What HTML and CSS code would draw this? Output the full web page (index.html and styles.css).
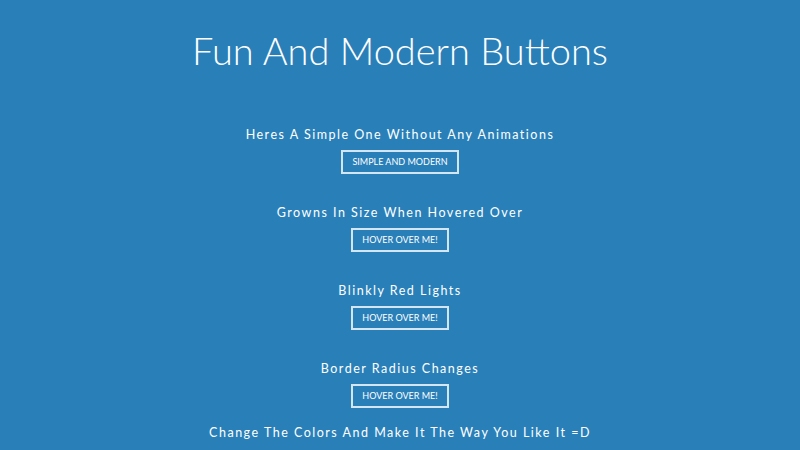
FILE: index.html
```html
<!DOCTYPE html>
<html lang="en">
<head>
    <meta charset="UTF-8">
    <meta name="viewport" content="width=device-width, initial-scale=1.0">
    <title>Fun And Modern Buttons</title>
    <link rel="stylesheet" href="styles.css">
</head>
<body>
    <h1>Fun And Modern Buttons</h1>

    <div class="demo">
        <p class="label">Heres A Simple One Without Any Animations</p>
        <button class="btn btn_simple">Simple and Modern</button>
    </div>
    <div class="demo">
        <p class="label">Growns In Size When Hovered Over</p>
        <button class="btn btn_grow">Hover Over Me!</button>
    </div>
    <div class="demo">
        <p class="label">Blinkly Red Lights</p>
        <button class="btn btn_blink">Hover Over Me!</button>
    </div>
    <div class="demo last">
        <p class="label">Border Radius Changes</p>
        <button class="btn btn_radius">Hover Over Me!</button>
    </div>
    <p class="label">Change The Colors And Make It The Way You Like It =D</p>
</body>
</html>
```
FILE: styles.css
```css
* {
  font-family: Lato, "Open Sans", sans-serif;
  box-sizing: border-box;
}
body {
  margin: 0;
  height: 100vh;
  background: #2980b9;
  color: #fff;
  text-align: center;
}
h1 {
  margin: 0;
  padding-top: 24px;
  height: 125px;
  font-size: 38px;
  font-weight: 300;
  line-height: 52px;
}
.demo {
  padding-bottom: 29.5px;
}
.demo.last {
  padding-bottom: 15px;
}
.label {
  margin: 0 0 4px;
  line-height: 20px;
  font-size: 12.5px;
  letter-spacing: 1.5px;
}
.btn {
  display: inline-block;
  height: 24px;
  padding: 0 9px;
  border: 2px solid rgba(255, 255, 255, 0.8);
  background: transparent;
  color: #fff;
  font-size: 9px;
  text-transform: uppercase;
  cursor: pointer;
  transition: all 0.3s;
}
.btn_grow:hover {
  transform: scale(1.1);
}
.btn_blink:hover {
  animation: blink 0.6s infinite;
}
.btn_radius:hover {
  border-radius: 12px;
}
@keyframes blink {
  50% {
    border-color: #e74c3c;
    color: #e74c3c;
  }
}
```
